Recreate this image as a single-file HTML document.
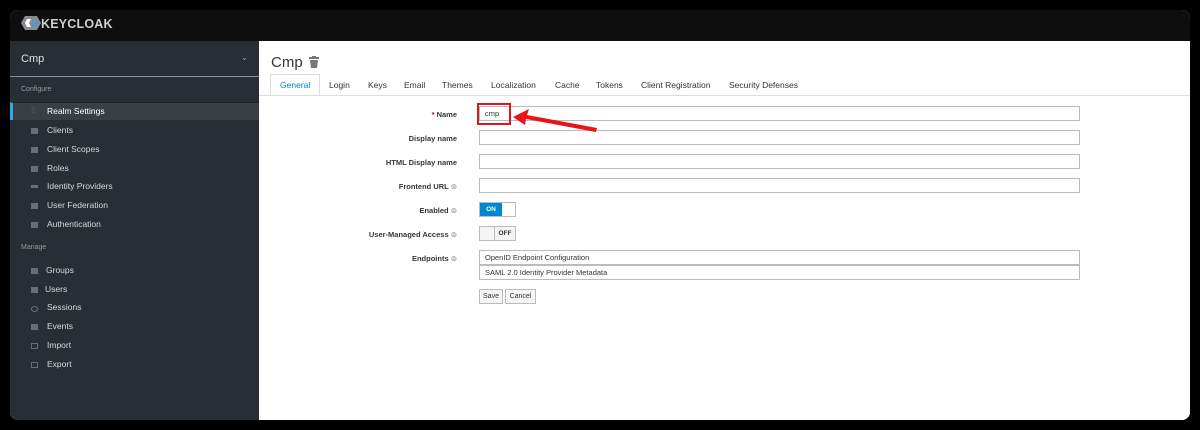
<!DOCTYPE html>
<html><head><style>
*{margin:0;padding:0;box-sizing:border-box}
body{width:1200px;height:430px;background:#000;font-family:"Liberation Sans",sans-serif;position:relative;overflow:hidden}
.win{position:absolute;left:10px;top:10px;width:1180px;height:410px;border-radius:8px;overflow:hidden;background:#fff}
.hdr{position:absolute;left:0;top:0;width:1180px;height:31px;background:#0e0e0f}
.side{position:absolute;left:0;top:31px;width:249px;height:379px;background:#292e34;color:#d1d1d1}
.main{position:absolute;left:249px;top:31px;right:0;bottom:0;background:#fff}
.abs{position:absolute}
.si{position:absolute;left:37px;font-size:8.5px;color:#d8d8d8}
.ic{position:absolute;left:21px;width:7px;height:6px;background:#6a6e73}
.lbl{position:absolute;right:733px;font-size:7.5px;font-weight:bold;color:#363636;text-align:right}
.inp{position:absolute;left:469px;width:601px;height:15px;border:1px solid #bbb;background:#fff}
.tab{position:absolute;top:39px;font-size:8.5px;color:#363636}
.q{color:#888;font-weight:normal}
</style></head><body>
<div class="win">
 <div class="hdr">
  <svg class="abs" style="left:11px;top:6px" width="20" height="14" viewBox="0 0 20 14"><polygon points="4,0 16,0 20,7 16,14 4,14 0,7" fill="#8a8d90"/><polygon points="6,3 10,3 8,7 10,11 6,11 4,7" fill="#fff"/><polygon points="11,3 14,3 16,7 14,11 11,11 13,7" fill="#39a5dc"/></svg>
  <div class="abs" style="left:31px;top:7px;font-size:12.5px;font-weight:bold;color:#d0d0d0;letter-spacing:.2px">KEYCLOAK</div>
 </div>
 <div class="side">
  <div class="abs" style="left:11px;top:12px;font-size:11px;color:#e0e0e0">Cmp</div>
  <div class="abs" style="left:231px;top:12px;font-size:8px;color:#aaa">⌄</div>
  <div class="abs" style="left:0;top:35px;width:249px;height:1px;background:#8b8d8f"></div>
  <div class="abs" style="left:11px;top:45px;font-size:7px;color:#999">Configure</div>
  <div class="abs" style="left:0;top:61px;width:249px;height:18px;background:#3a3f44;border-left:3px solid #39a5dc;border-top:1px solid #1f2226"></div>
  <div class="abs" style="left:21px;top:64px;font-size:9px;color:#39a5dc">⫶⫶</div>
  <div class="si" style="top:65px;color:#fff">Realm Settings</div>
  <div class="ic" style="top:87px"></div><div class="si" style="top:84px">Clients</div>
  <div class="ic" style="top:106px"></div><div class="si" style="top:103px">Client Scopes</div>
  <div class="ic" style="top:125px"></div><div class="si" style="top:122px">Roles</div>
  <div class="ic" style="top:144px;height:3px"></div><div class="si" style="top:140px">Identity Providers</div>
  <div class="ic" style="top:162px"></div><div class="si" style="top:159px">User Federation</div>
  <div class="ic" style="top:181px"></div><div class="si" style="top:178px">Authentication</div>
  <div class="abs" style="left:11px;top:203px;font-size:7px;color:#999">Manage</div>
  <div class="ic" style="top:227px"></div><div class="si" style="left:36px;top:224px">Groups</div>
  <div class="ic" style="top:246px"></div><div class="si" style="left:35px;top:243px">Users</div>
  <div class="ic" style="top:265px;border-radius:50%;background:none;border:1px solid #6a6e73"></div><div class="si" style="top:261px">Sessions</div>
  <div class="ic" style="top:283px"></div><div class="si" style="top:280px">Events</div>
  <div class="ic" style="top:302px;background:none;border:1px solid #6a6e73"></div><div class="si" style="top:299px">Import</div>
  <div class="ic" style="top:321px;background:none;border:1px solid #6a6e73"></div><div class="si" style="top:318px">Export</div>
 </div>
 <div class="main">
  <div class="abs" style="left:12px;top:13px;font-size:15px;color:#363636">Cmp</div>
  <svg class="abs" style="left:50px;top:15px" width="10" height="12" viewBox="0 0 10 12"><rect x="0" y="1" width="10" height="2" fill="#777"/><rect x="3" y="0" width="4" height="1.5" fill="#777"/><path d="M1,4 H9 L8,12 H2 Z" fill="#777"/></svg>
  <div class="abs" style="left:11px;top:33px;width:50px;height:22px;border:1px solid #ddd;border-bottom:none;background:#fff"></div>
  <div class="abs" style="left:0;top:54px;width:931px;height:1px;background:#ddd"></div>
  <div class="tab" style="left:21px;color:#0088ce">General</div>
  <div class="tab" style="left:70px">Login</div>
  <div class="tab" style="left:109px">Keys</div>
  <div class="tab" style="left:145px">Email</div>
  <div class="tab" style="left:183px">Themes</div>
  <div class="tab" style="left:232px">Localization</div>
  <div class="tab" style="left:296px">Cache</div>
  <div class="tab" style="left:337px">Tokens</div>
  <div class="tab" style="left:382px">Client Registration</div>
  <div class="tab" style="left:470px">Security Defenses</div>
 </div>
 <div class="lbl" style="top:100px"><span style="color:#c00">*</span> Name</div>
 <div class="lbl" style="top:124px">Display name</div>
 <div class="lbl" style="top:148px">HTML Display name</div>
 <div class="lbl" style="top:172px">Frontend URL <span class="q">⊚</span></div>
 <div class="lbl" style="top:196px">Enabled <span class="q">⊚</span></div>
 <div class="lbl" style="top:220px">User-Managed Access <span class="q">⊚</span></div>
 <div class="lbl" style="top:244px">Endpoints <span class="q">⊚</span></div>
 <div class="inp" style="top:96px"><span style="position:absolute;left:5px;top:2px;font-size:7.5px;color:#333">cmp</span></div>
 <div class="inp" style="top:120px"></div>
 <div class="inp" style="top:144px"></div>
 <div class="inp" style="top:168px"></div>
 <div class="abs" style="left:469px;top:192px;width:37px;height:15px;border:1px solid #bbb;background:#fff"><div style="width:22px;height:13px;background:#0088ce;color:#fff;font-size:6.5px;font-weight:bold;text-align:center;line-height:13px">ON</div></div>
 <div class="abs" style="left:469px;top:216px;width:37px;height:15px;border:1px solid #bbb;background:#f5f5f5"><div style="position:absolute;left:14px;width:21px;height:13px;border-left:1px solid #bbb;color:#333;font-size:6.5px;font-weight:bold;text-align:center;line-height:13px">OFF</div></div>
 <div class="inp" style="top:240px"><span style="position:absolute;left:5px;top:2px;font-size:7.5px;color:#333">OpenID Endpoint Configuration</span></div>
 <div class="inp" style="top:255px"><span style="position:absolute;left:5px;top:2px;font-size:7.5px;color:#333">SAML 2.0 Identity Provider Metadata</span></div>
 <div class="abs" style="left:469px;top:279px;width:24px;height:15px;border:1px solid #bbb;background:#f5f5f5;font-size:7px;color:#333;text-align:center;line-height:13px">Save</div>
 <div class="abs" style="left:495px;top:279px;width:31px;height:15px;border:1px solid #bbb;background:#f5f5f5;font-size:7px;color:#333;text-align:center;line-height:13px">Cancel</div>
 <div class="abs" style="left:467px;top:93px;width:34px;height:22px;border:2px solid #e0141e"></div>
 <svg class="abs" style="left:495px;top:95px" width="100" height="30"><polygon points="8,12 24,4 22,10 92,23 91,27 21,14 20,20" fill="#e8141c"/></svg>
</div>
</body></html>
